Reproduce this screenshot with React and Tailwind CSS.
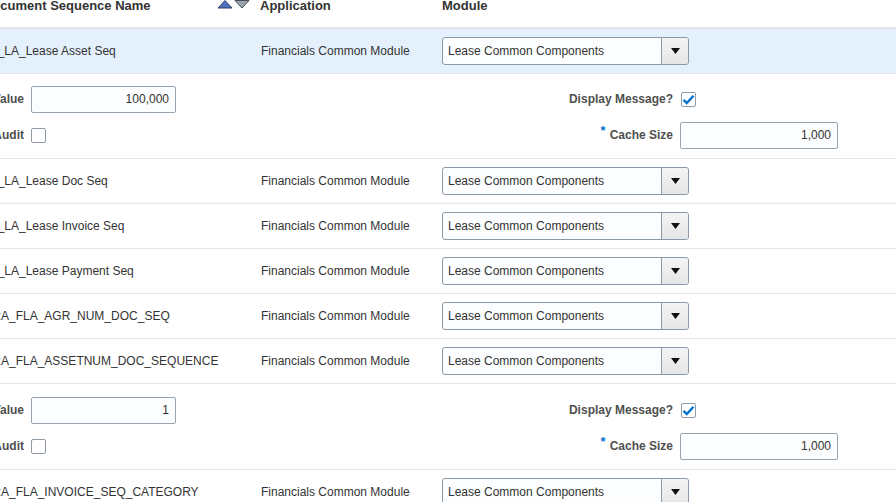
import React from 'react';

const rows = [
  { name: 'FA_LA_Lease Asset Seq', selected: true, detail: { value: '100,000', cache: '1,000' } },
  { name: 'FA_LA_Lease Doc Seq' },
  { name: 'FA_LA_Lease Invoice Seq' },
  { name: 'FA_LA_Lease Payment Seq' },
  { name: 'ORA_FLA_AGR_NUM_DOC_SEQ' },
  { name: 'ORA_FLA_ASSETNUM_DOC_SEQUENCE', detail: { value: '1', cache: '1,000' } },
  { name: 'ORA_FLA_INVOICE_SEQ_CATEGORY' },
];

const SortIcons = () => (
  <svg width="34" height="10" viewBox="0 0 34 10" className="shrink-0">
    <path d="M1 9 L8 1.5 L15 9 Z" fill="#4d73c0" stroke="#2f3f5e" strokeWidth="1" strokeLinejoin="round" />
    <path d="M18 1.5 L32 1.5 L25 9 Z" fill="#9aa3ad" stroke="#4a4f55" strokeWidth="1" strokeLinejoin="round" />
  </svg>
);

const Checkbox = ({ checked }) => (
  <span className="w-[15px] h-[15px] border border-[#8e9aa6] rounded-[2px] bg-white flex items-center justify-center">
    {checked && (
      <svg width="13" height="11" viewBox="0 0 13 11">
        <path d="M1.5 5.8 L4.8 9 L11.5 1.8" fill="none" stroke="#0572ce" strokeWidth="2.4" />
      </svg>
    )}
  </span>
);

const TextInput = ({ value, className }) => (
  <div className={`h-[27px] border border-[#97a4b0] rounded-[2px] bg-[#fcfdfe] flex items-center justify-end pr-[6px] text-[12px] text-[#333] ${className}`}>
    {value}
  </div>
);

const SelectBox = ({ value }) => (
  <div className="w-[247px] h-[28px] border border-[#8b98a5] rounded-[3px] bg-[#fcfdfe] flex items-stretch">
    <div className="flex-1 flex items-center pl-[5px] text-[12px] text-[#333]">{value}</div>
    <div className="w-[27px] border-l border-[#8b98a5] bg-gradient-to-b from-[#f4f4f4] to-[#e6e6e6] rounded-r-[3px] flex items-center justify-center">
      <svg width="9" height="6" viewBox="0 0 9 6">
        <path d="M0 0 L9 0 L4.5 6 Z" fill="#111" />
      </svg>
    </div>
  </div>
);

const Detail = ({ value, cache, extraTop }) => (
  <div className={`border-b border-[#e6e6e6] ${extraTop ? 'pt-[8px]' : 'pt-[7px]'} pb-[5px]`}>
    <div className="w-[860px]">
      <div className="h-[36px] flex items-center">
        <div className="w-[41px] text-right font-bold text-[12px] text-[#4f4f4f] whitespace-nowrap overflow-hidden flex justify-end">Initial Value</div>
        <TextInput value={value} className="ml-[7px] w-[145px]" />
        <div className="flex-1" />
        <div className="font-bold text-[12px] text-[#4f4f4f]">Display Message?</div>
        <div className="ml-[8px] w-[162px] flex">
          <Checkbox checked />
        </div>
      </div>
      <div className="h-[36px] flex items-center">
        <div className="w-[41px] text-right font-bold text-[12px] text-[#4f4f4f] whitespace-nowrap overflow-hidden flex justify-end">Enable Audit</div>
        <div className="ml-[7px]">
          <Checkbox />
        </div>
        <div className="flex-1" />
        <div className="font-bold text-[12px] text-[#4f4f4f] flex items-start">
          <span className="text-[#0572ce] text-[13px] leading-none mr-[4px] -mt-[2px]">*</span>
          <span>Cache Size</span>
        </div>
        <TextInput value={cache} className="ml-[7px] w-[158px]" />
        <div className="w-[5px]" />
      </div>
    </div>
  </div>
);

export default function App() {
  return (
    <div className="w-[896px] h-[502px] overflow-hidden bg-white font-['Liberation_Sans',Arial,sans-serif] text-[#333]">
      <div className="-ml-[17px] -mt-[4px] w-[930px]">
        {/* header */}
        <div className="h-[33px] flex border-b-2 border-[#e3e3e3] text-[13px] font-bold text-[#333]">
          <div className="w-[271px] flex items-start pr-[3px]">
            <span className="whitespace-nowrap">Document Sequence Name</span>
            <div className="flex-1" />
            <div className="mt-[3px]"><SortIcons /></div>
          </div>
          <div className="w-[182px] pl-[5px] border-l border-white">Application</div>
          <div className="flex-1 pl-[5px] border-l border-white">Module</div>
        </div>
        {rows.map((r, i) => (
          <React.Fragment key={r.name}>
            <div className={`h-[45px] flex items-center border-b border-[#e6e6e6] text-[12px] ${r.selected ? 'bg-[#e4f1fd]' : 'bg-white'}`}>
              <div className="w-[271px] whitespace-nowrap">{r.name}</div>
              <div className="w-[182px] pl-[6px] border-l border-transparent">Financials Common Module</div>
              <div className="flex-1 pl-[6px]">
                <SelectBox value="Lease Common Components" />
              </div>
            </div>
            {r.detail && <Detail value={r.detail.value} cache={r.detail.cache} extraTop={i > 0} />}
          </React.Fragment>
        ))}
      </div>
    </div>
  );
}
